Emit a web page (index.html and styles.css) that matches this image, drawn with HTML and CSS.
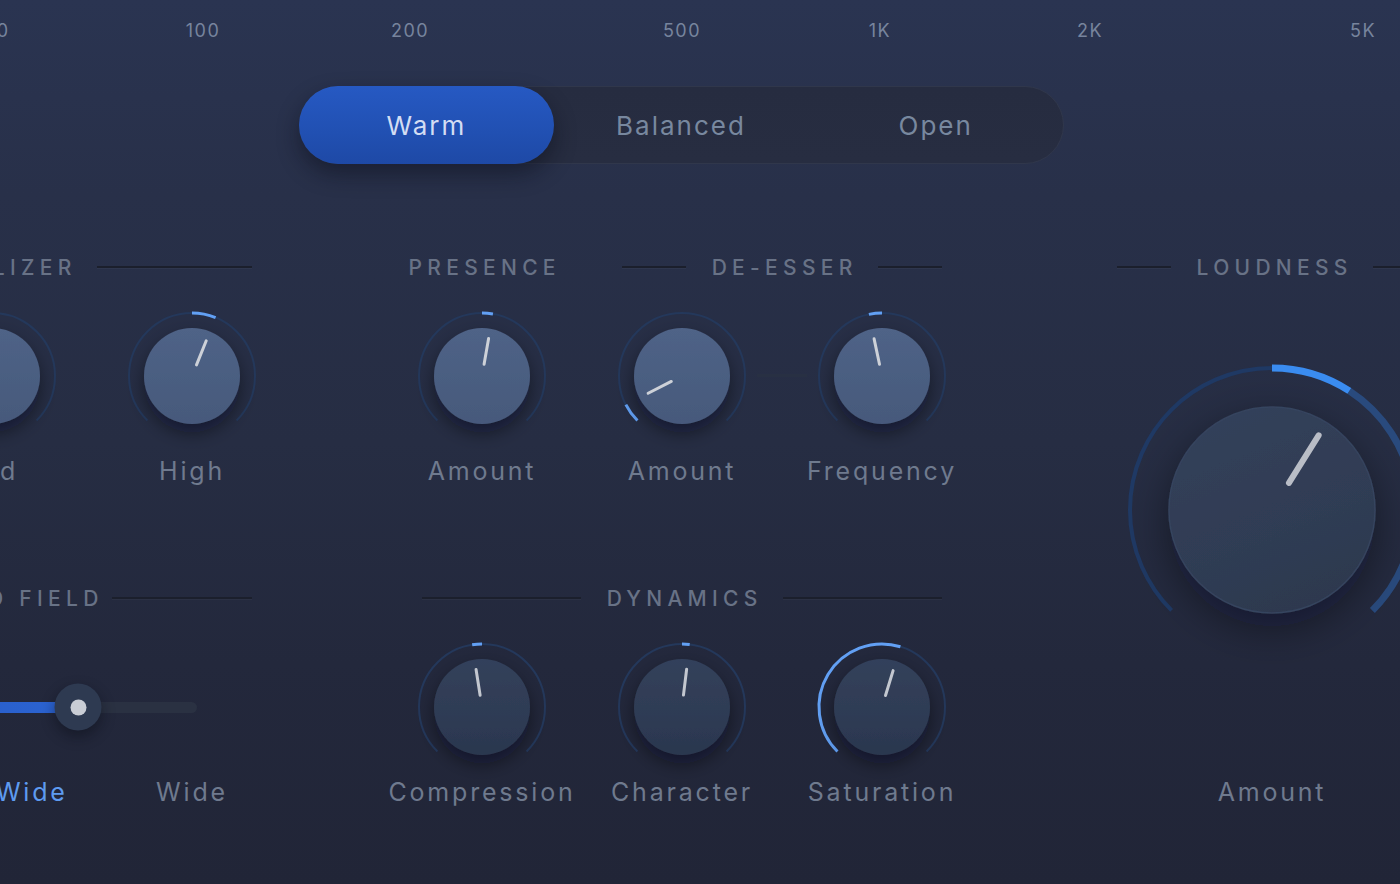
FILE: index.html
```html
<!DOCTYPE html>
<html lang="en">
<head>
<meta charset="utf-8">
<title>Voice Processor</title>
<link rel="stylesheet" href="styles.css">
</head>
<body>
<svg class="defs" aria-hidden="true">
  <defs>
    <filter id="ks" x="-60%" y="-60%" width="220%" height="220%">
      <feDropShadow dx="0" dy="9" stdDeviation="9" flood-color="#080b14" flood-opacity="0.45"/>
    </filter>
    <filter id="kl" x="-70%" y="-70%" width="240%" height="240%">
      <feDropShadow dx="0" dy="14" stdDeviation="20" flood-color="#080b14" flood-opacity="0.42"/>
    </filter>
    <linearGradient id="gLight" x1="0" y1="0" x2="0" y2="1">
      <stop offset="0" stop-color="#4f6387"/>
      <stop offset="1" stop-color="#46597b"/>
    </linearGradient>
    <linearGradient id="gDark" x1="0" y1="0" x2="0" y2="1">
      <stop offset="0" stop-color="#33415b"/>
      <stop offset="1" stop-color="#2b374f"/>
    </linearGradient>
    <linearGradient id="gBig" x1="0.2" y1="0" x2="0.6" y2="1">
      <stop offset="0" stop-color="#33415b"/>
      <stop offset="1" stop-color="#2d394f"/>
    </linearGradient>
  </defs>
</svg>

<div class="scale">
  <span class="tick" style="left:-3px">50</span>
  <span class="tick" style="left:203px">100</span>
  <span class="tick" style="left:410px">200</span>
  <span class="tick" style="left:682px">500</span>
  <span class="tick" style="left:880px">1K</span>
  <span class="tick" style="left:1090px">2K</span>
  <span class="tick" style="left:1363px">5K</span>
  <span class="tick" style="left:1569px">10K</span>
</div>

<div class="presets">
  <button class="seg active">Warm</button>
  <button class="seg">Balanced</button>
  <button class="seg">Open</button>
</div>

<main class="panels">
  <!-- LEFT COLUMN -->
  <section class="col col-left">
    <div class="group">
      <h2 class="head"><span>EQUALIZER</span></h2>
      <div class="knobs">
        <div class="cell">
          <svg class="knob light" viewBox="0 0 136 136" width="136" height="136">
            <path class="track" d="M23.45 112.55 A63 63 0 1 1 112.55 112.55"/>
            <path class="val" d="M54.9 6.38 A63 63 0 0 1 68 5"/>
            <circle class="body" cx="68" cy="68" r="48"/>
            <line class="ptr" x1="65.5" y1="56.26" x2="60.1" y2="30.83"/>
          </svg>
          <div class="label">Low</div>
        </div>
        <div class="cell">
          <svg class="knob light" viewBox="0 0 136 136" width="136" height="136">
            <path class="track" d="M23.45 112.55 A63 63 0 1 1 112.55 112.55"/>
            <path class="val" d="M58.15 5.78 A63 63 0 0 1 68 5"/>
            <circle class="body" cx="68" cy="68" r="48"/>
            <line class="ptr" x1="66.12" y1="56.15" x2="62.06" y2="30.47"/>
          </svg>
          <div class="label">Mid</div>
        </div>
        <div class="cell">
          <svg class="knob light" viewBox="0 0 136 136" width="136" height="136">
            <path class="track" d="M23.45 112.55 A63 63 0 1 1 112.55 112.55"/>
            <path class="val" d="M68 5 A63 63 0 0 1 91.6 9.59"/>
            <circle class="body" cx="68" cy="68" r="48"/>
            <line class="ptr" x1="72.5" y1="56.87" x2="82.23" y2="32.77"/>
          </svg>
          <div class="label">High</div>
        </div>
      </div>
    </div>

    <div class="group group-2">
      <h2 class="head head-field"><span>SOUND FIELD</span></h2>
      <div class="slider-area">
        <div class="slider">
          <div class="fill" style="width:71%"></div>
          <div class="thumb" style="left:71%"><span class="dot"></span></div>
        </div>
      </div>
      <div class="knobs">
        <div class="cell"><div class="label label-2">Mono</div></div>
        <div class="cell"><div class="label label-2 on">Semi Wide</div></div>
        <div class="cell"><div class="label label-2">Wide</div></div>
      </div>
    </div>
  </section>

  <!-- MIDDLE COLUMN -->
  <section class="col col-mid">
    <div class="row1">
      <div class="group presence">
        <h2 class="head"><span>PRESENCE</span></h2>
        <div class="knobs">
          <div class="cell">
            <svg class="knob light" viewBox="0 0 136 136" width="136" height="136">
              <path class="track" d="M23.45 112.55 A63 63 0 1 1 112.55 112.55"/>
              <path class="val" d="M68 5 A63 63 0 0 1 78.94 5.96"/>
              <circle class="body" cx="68" cy="68" r="48"/>
              <line class="ptr" x1="70.08" y1="56.18" x2="74.6" y2="30.58"/>
            </svg>
            <div class="label">Amount</div>
          </div>
        </div>
      </div>

      <div class="group deesser">
        <h2 class="head"><span>DE-ESSER</span></h2>
        <div class="knobs linked">
          <div class="cell">
            <svg class="knob light" viewBox="0 0 136 136" width="136" height="136">
              <path class="track" d="M23.45 112.55 A63 63 0 1 1 112.55 112.55"/>
              <path class="val" d="M23.45 112.55 A63 63 0 0 1 11.87 96.6"/>
              <circle class="body" cx="68" cy="68" r="48"/>
              <line class="ptr" x1="57.31" y1="73.45" x2="34.14" y2="85.25"/>
            </svg>
            <div class="label">Amount</div>
          </div>
          <div class="link"></div>
          <div class="cell">
            <svg class="knob light" viewBox="0 0 136 136" width="136" height="136">
              <path class="track" d="M23.45 112.55 A63 63 0 1 1 112.55 112.55"/>
              <path class="val" d="M54.9 6.38 A63 63 0 0 1 68 5"/>
              <circle class="body" cx="68" cy="68" r="48"/>
              <line class="ptr" x1="65.5" y1="56.26" x2="60.1" y2="30.83"/>
            </svg>
            <div class="label">Frequency</div>
          </div>
        </div>
      </div>
    </div>

    <div class="group group-2">
      <h2 class="head"><span>DYNAMICS</span></h2>
      <div class="knobs">
        <div class="cell">
          <svg class="knob dark" viewBox="0 0 136 136" width="136" height="136">
            <path class="track" d="M23.45 112.55 A63 63 0 1 1 112.55 112.55"/>
            <path class="val" d="M58.15 5.78 A63 63 0 0 1 68 5"/>
            <circle class="body" cx="68" cy="68" r="48"/>
            <line class="ptr" x1="66.12" y1="56.15" x2="62.06" y2="30.47"/>
          </svg>
          <div class="label label-2">Compression</div>
        </div>
        <div class="cell">
          <svg class="knob dark" viewBox="0 0 136 136" width="136" height="136">
            <path class="track" d="M23.45 112.55 A63 63 0 1 1 112.55 112.55"/>
            <path class="val" d="M68 5 A63 63 0 0 1 75.68 5.47"/>
            <circle class="body" cx="68" cy="68" r="48"/>
            <line class="ptr" x1="69.46" y1="56.09" x2="72.63" y2="30.28"/>
          </svg>
          <div class="label label-2">Character</div>
        </div>
        <div class="cell">
          <svg class="knob dark" viewBox="0 0 136 136" width="136" height="136">
            <path class="track" d="M23.45 112.55 A63 63 0 1 1 112.55 112.55"/>
            <path class="val" d="M23.45 112.55 A63 63 0 0 1 86.42 7.75"/>
            <circle class="body" cx="68" cy="68" r="48"/>
            <line class="ptr" x1="71.5" y1="56.52" x2="79.11" y2="31.66"/>
          </svg>
          <div class="label label-2">Saturation</div>
        </div>
      </div>
    </div>
  </section>

  <!-- RIGHT COLUMN -->
  <section class="col col-right">
    <h2 class="head"><span>LOUDNESS</span></h2>
    <svg class="knob-lg" viewBox="0 0 300 300" width="300" height="300">
      <path class="lg-track" d="M49.59 250.41 A142 142 0 1 1 250.41 250.41"/>
      <path class="lg-track2" d="M227.33 30.91 A142 142 0 0 1 250.41 250.41"/>
      <path class="lg-val" d="M150 8 A142 142 0 0 1 227.33 30.91"/>
      <circle class="lg-body" cx="150" cy="150" r="103"/>
      <line class="lg-ptr" x1="166.96" y1="122.86" x2="196.63" y2="75.38"/>
    </svg>
    <div class="label label-lg">Amount</div>
  </section>
</main>
</body>
</html>
```

FILE: styles.css
```css
html, body {
  margin: 0;
  padding: 0;
  overflow: hidden;
}

body {
  width: 1400px;
  height: 884px;
  background: linear-gradient(180deg, #2a3451 0%, #283049 22%, #262d43 50%, #23283c 75%, #212537 100%);
  font-family: Inter, "Liberation Sans", sans-serif;
  color: #727d91;
}

.defs {
  position: absolute;
  width: 0;
  height: 0;
  overflow: hidden;
}

/* frequency scale */
.scale {
  position: relative;
  height: 60px;
}

.tick {
  position: absolute;
  top: 30px;
  transform: translate(-50%, -50%);
  font-size: 18px;
  letter-spacing: 1.5px;
  color: #77849d;
  white-space: nowrap;
}

/* preset switch */
.presets {
  box-sizing: border-box;
  display: flex;
  width: 765px;
  height: 78px;
  margin: 26px 0 0 299px;
  border-radius: 39px;
  background: linear-gradient(180deg, #262c40, #272d41);
  border: 1px solid #30374b;
}

.seg {
  flex: 1;
  border: 0;
  background: none;
  border-radius: 39px;
  font-family: Inter, "Liberation Sans", sans-serif;
  font-size: 26px;
  letter-spacing: 2px;
  color: #78889f;
  padding: 0;
  cursor: pointer;
}

.seg.active {
  margin: -1px 0 -1px -1px;
  background: linear-gradient(180deg, #2659c3 0%, #2150b2 60%, #1e49a6 100%);
  color: #d3ddf3;
  box-shadow: 0 10px 22px rgba(8, 11, 22, 0.45);
}

/* panels */
.panels {
  display: flex;
  align-items: flex-start;
  margin: 90px 0 0 -268px;
}

.col-left { width: 520px; flex: none; }
.col-mid { width: 520px; flex: none; margin-left: 170px; }
.col-right { width: 310px; flex: none; margin-left: 175px; display: flex; flex-direction: column; align-items: center; }

.head {
  display: flex;
  align-items: center;
  justify-content: center;
  gap: 26px;
  height: 26px;
  margin: 0;
  font-size: 21px;
  font-weight: 500;
  letter-spacing: 5.3px;
  color: #687286;
  white-space: nowrap;
}

.head-field {
  gap: 14px;
  padding-left: 20px;
}

.col-right .head { align-self: stretch; }

.head span { margin-right: -5.3px; }

.head::before,
.head::after {
  content: "";
  flex: 1 1 0;
  height: 2px;
  background: #1b1f2c;
  box-shadow: 0 1px 0 rgba(255, 255, 255, 0.035);
}

.group-2 { margin-top: 99px; }

.row1 {
  display: flex;
  gap: 80px;
}

.presence { width: 120px; }
.deesser { width: 320px; }

.knobs {
  display: flex;
  gap: 80px;
}

.knobs.linked { gap: 15px; }

.link {
  width: 50px;
  height: 3px;
  margin-top: 94px;
  background: #283043;
  flex: none;
}

.cell {
  width: 120px;
  flex: none;
  display: flex;
  flex-direction: column;
  align-items: center;
}

.knob {
  display: block;
  margin: 28px -8px 0;
  overflow: visible;
}

.track {
  fill: none;
  stroke: #24385b;
  stroke-width: 2;
}

.val {
  fill: none;
  stroke: #62a0f4;
  stroke-width: 3;
}

.knob .body { filter: url(#ks); }
.knob.light .body { fill: url(#gLight); }
.knob.dark .body { fill: url(#gDark); }

.ptr {
  stroke: #cdd1d8;
  stroke-width: 3;
  stroke-linecap: round;
}

.knob.dark .ptr { stroke: #c3c7cf; }

.label {
  width: 240px;
  margin: 12px -60px 0;
  text-align: center;
  font-size: 25px;
  line-height: 30px;
  letter-spacing: 2.8px;
  color: #6f7a8e;
  white-space: nowrap;
}

.label-2 { margin-top: 2px; }

.label.on { color: #5e9bf0; }

/* stereo slider */
.slider-area {
  height: 136px;
  margin-top: 28px;
  display: flex;
  align-items: center;
  justify-content: center;
}

.slider {
  position: relative;
  width: 410px;
  height: 11px;
  border-radius: 6px;
  background: #2a3142;
}

.fill {
  height: 100%;
  border-radius: 6px 0 0 6px;
  background: linear-gradient(90deg, #2457c2, #2c64d2);
}

.thumb {
  position: absolute;
  top: 50%;
  width: 47px;
  height: 47px;
  border-radius: 50%;
  transform: translate(-50%, -50%);
  background: #2e3a51;
  box-shadow: 0 6px 14px rgba(8, 11, 20, 0.45);
  display: flex;
  align-items: center;
  justify-content: center;
}

.dot {
  width: 16px;
  height: 16px;
  border-radius: 50%;
  background: #c9cdd5;
}

/* loudness */
.knob-lg {
  display: block;
  margin-top: 80px;
  overflow: visible;
}

.lg-track {
  fill: none;
  stroke: #1f3964;
  stroke-width: 4;
}

.lg-track2 {
  fill: none;
  stroke: #294a7d;
  stroke-width: 7;
}

.lg-val {
  fill: none;
  stroke: #3a8cf0;
  stroke-width: 7;
}

.lg-body {
  fill: url(#gBig);
  stroke: #36445e;
  stroke-width: 1.5;
  filter: url(#kl);
}

.lg-ptr {
  stroke: #b9bdc6;
  stroke-width: 6;
  stroke-linecap: round;
}

.label-lg {
  margin-top: 117px;
}
```
